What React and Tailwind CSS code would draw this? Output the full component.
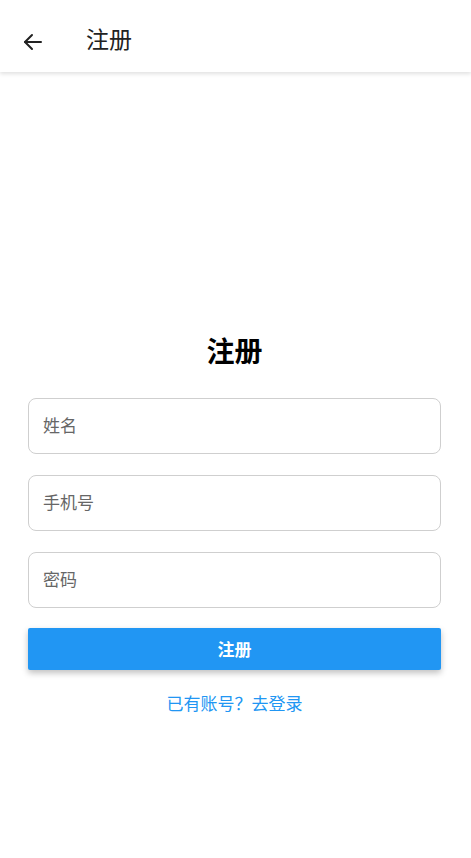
import React from 'react';

const font = { fontFamily: 'Roboto, "Noto Sans CJK SC", sans-serif' };

const fields = ['姓名', '手机号', '密码'];

export default function App() {
  return (
    <div className="min-h-[858px] bg-white" style={font}>
      <header className="h-[72px] flex items-center pt-[11px] bg-white shadow-[0_2px_4px_rgba(0,0,0,0.12)]">
        <button className="ml-[20px] w-[26px] h-[26px] flex items-center justify-center text-[#222]">
          <svg width="24" height="24" viewBox="0 0 24 24" fill="none" stroke="currentColor" strokeWidth="2" strokeLinecap="round" strokeLinejoin="round">
            <path d="M20 12H4" />
            <path d="M11 5l-7 7 7 7" />
          </svg>
        </button>
        <h1 className="ml-[40px] text-[23px] text-[#222]">注册</h1>
      </header>

      <main className="pl-[28px] pr-[30px] pt-[264px]">
        <h2 className="text-center text-[28px] leading-[34px] font-bold text-black">注册</h2>
        <div className="mt-[28px] flex flex-col gap-[21px]">
          {fields.map((f) => (
            <input
              key={f}
              type={f === '密码' ? 'password' : 'text'}
              placeholder={f}
              className="h-[56px] w-full rounded-[8px] border border-[#cfcfcf] px-[14px] text-[17px] placeholder:text-[#666] outline-none"
            />
          ))}
        </div>
        <button className="mt-[20px] h-[42px] w-full rounded-[2px] bg-[#2196f3] pt-[4px] text-white text-[17px] font-bold shadow-[0_3px_6px_rgba(0,0,0,0.25)]">
          注册
        </button>
        <p className="mt-[22px] text-center text-[17px] text-[#2196f3]">已有账号？去登录</p>
      </main>
    </div>
  );
}
